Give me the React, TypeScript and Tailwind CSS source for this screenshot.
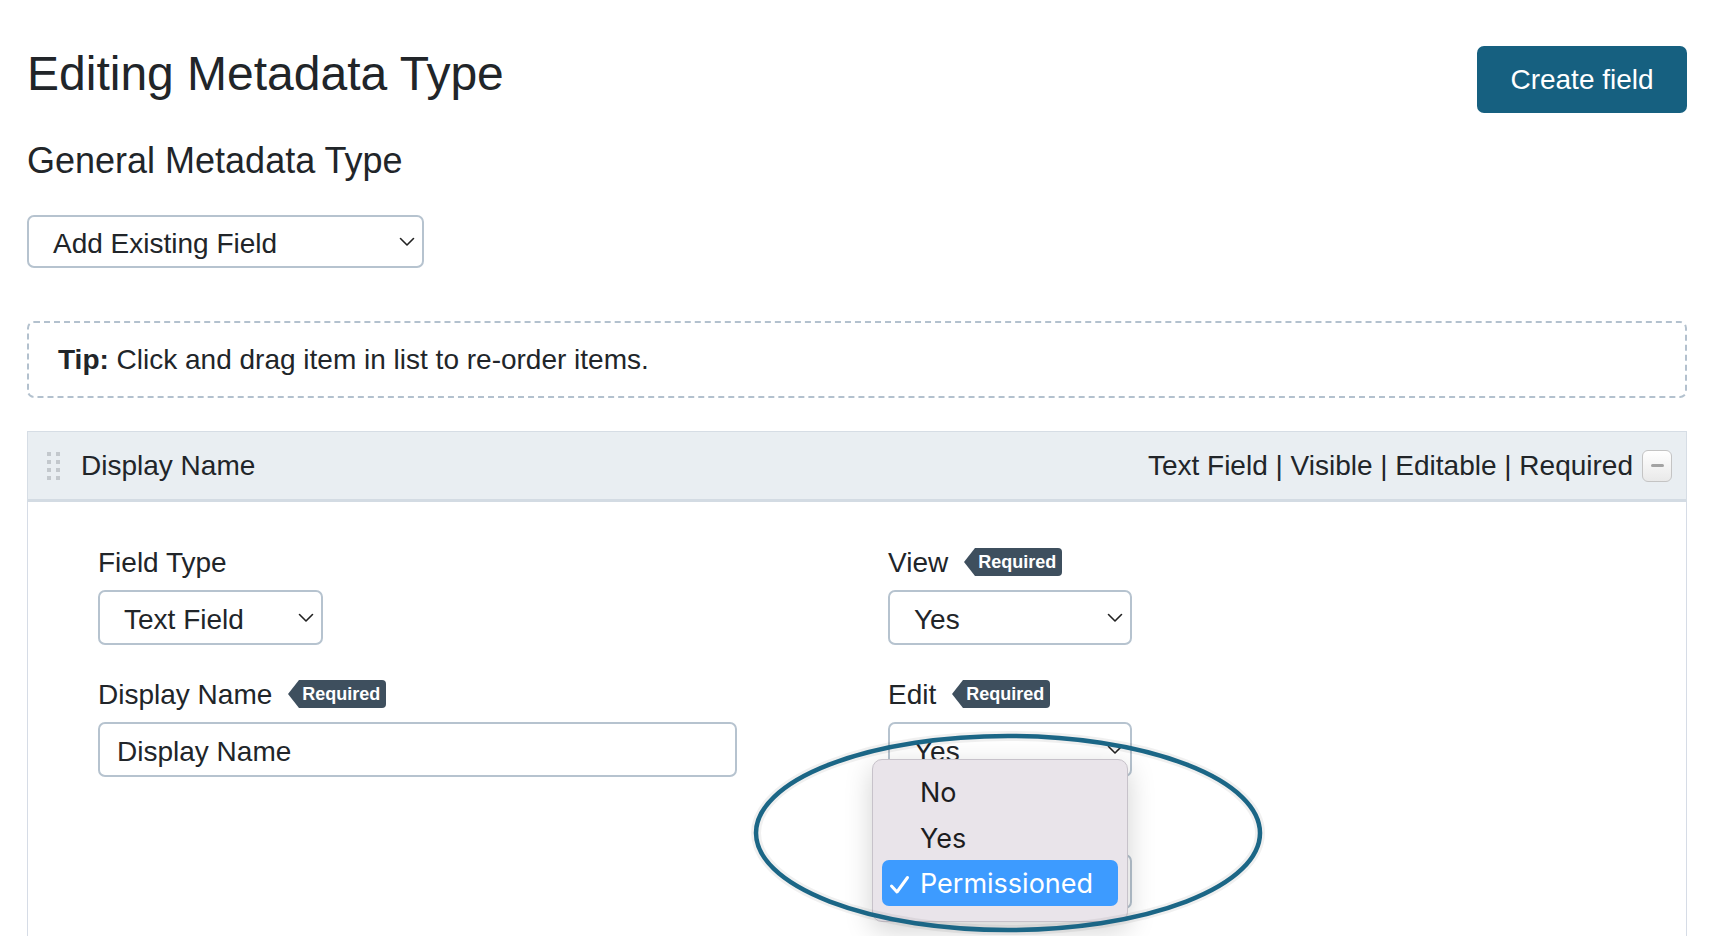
import React from "react";

const Chevron = () => (
  <svg width="16" height="10" viewBox="0 0 16 10" fill="none">
    <path d="M1.5 1.5 L8 8 L14.5 1.5" stroke="#222" strokeWidth="1.6" strokeLinecap="round" strokeLinejoin="round" />
  </svg>
);

const Badge = () => (
  <span className="ml-[16px] mb-[2px] flex items-center h-[28px]">
    <span className="w-0 h-0 border-y-[14px] border-y-transparent border-r-[11px] border-r-[#3e4f5e]" />
    <span className="h-[28px] bg-[#3e4f5e] rounded-r-[4px] pl-[3px] pr-[6px] text-white font-bold text-[18px] leading-[28px]">
      Required
    </span>
  </span>
);

const Select = ({ text, w, h = 55 }: { text: string; w: string; h?: number }) => (
  <div
    className={`${w} ${h === 53 ? "h-[53px]" : "h-[55px]"} border-2 border-[#b6c3cf] rounded-[7px] bg-white flex items-center justify-between pl-[24px] pr-[7px] text-[28px]`}
  >
    <span className="pt-[4px]">{text}</span>
    <Chevron />
  </div>
);

export default function App() {
  return (
    <div className="relative h-[936px] overflow-hidden bg-white font-['Liberation_Sans',Arial,sans-serif] text-[#212529] pl-[27px] pr-[23px] pt-[46px]">
      <div className="flex justify-between items-start">
        <h1 className="text-[48px] leading-none mt-[4px]">Editing Metadata Type</h1>
        <button className="w-[210px] h-[67px] rounded-[7px] bg-[#166080] text-white text-[28px]">Create field</button>
      </div>
      <h2 className="mt-[30px] text-[36px] leading-none">General Metadata Type</h2>
      <div className="mt-[36px]">
        <Select text="Add Existing Field" w="w-[397px]" h={53} />
      </div>
      <div className="mt-[53px] h-[77px] border-2 border-dashed border-[#b3c1ce] rounded-[7px] flex items-center pl-[29px] text-[28px]">
        <span>
          <b>Tip:</b> Click and drag item in list to re-order items.
        </span>
      </div>

      <div className="mt-[33px]">
        <div className="h-[71px] bg-[#e9eef2] border border-[#d6dde5] border-b-[3px] border-b-[#d3dbe3] flex items-center pl-[19px] pr-[14px]">
          <div className="grid grid-cols-2 gap-x-[5px] gap-y-[4px]">
            {Array.from({ length: 8 }).map((_, i) => (
              <span key={i} className="w-[4px] h-[4px] bg-[#c3c8cd]" />
            ))}
          </div>
          <span className="ml-[21px] text-[28px]">Display Name</span>
          <span className="ml-auto text-[28px]">Text Field | Visible | Editable | Required</span>
          <span className="ml-[9px] w-[30px] h-[32px] rounded-[6px] border border-[#c4c4c4] bg-gradient-to-b from-white to-[#e9e9e9] flex items-center justify-center">
            <span className="w-[13px] h-[3px] rounded-full bg-[#a3a3a3]" />
          </span>
        </div>
        <div className="h-[500px] border-x border-[#d6dce6] pt-[43px] pl-[70px] grid grid-cols-[790px_1fr]">
          <div>
            <div className="h-[36px] text-[28px] leading-[36px]">Field Type</div>
            <div className="mt-[9px]">
              <Select text="Text Field" w="w-[225px]" />
            </div>
            <div className="mt-[32px] h-[36px] flex items-center text-[28px] leading-[36px]">
              <span>Display Name</span>
              <Badge />
            </div>
            <div className="mt-[9px] w-[639px] h-[55px] border-2 border-[#b6c3cf] rounded-[7px] flex items-center pl-[17px] pt-[4px] text-[28px]">
              Display Name
            </div>
          </div>
          <div>
            <div className="h-[36px] flex items-center text-[28px] leading-[36px]">
              <span>View</span>
              <Badge />
            </div>
            <div className="mt-[9px]">
              <Select text="Yes" w="w-[244px]" />
            </div>
            <div className="mt-[32px] h-[36px] flex items-center text-[28px] leading-[36px]">
              <span>Edit</span>
              <Badge />
            </div>
            <div className="mt-[9px] relative">
              <Select text="Yes" w="w-[244px]" />
              <div className="absolute z-10 left-[-16px] top-[37px] w-[256px] rounded-[10px] border border-[#c7c2ca] bg-[#e9e4ea] pt-[8px] pb-[15px] px-[9px] shadow-[0_8px_28px_rgba(0,0,0,0.18)] font-['Inter',sans-serif] text-[27px] text-[#1d1d1f]">
                <div className="h-[46px] flex items-center pl-[38px] pt-[5px]">No</div>
                <div className="h-[46px] flex items-center pl-[38px] pt-[5px]">Yes</div>
                <div className="h-[46px] flex items-center rounded-[7px] bg-[#3d9bff] text-white pl-[7px] pt-[3px]">
                  <svg width="21" height="20" viewBox="0 0 21 20" fill="none">
                    <path d="M2.5 11 L8 17 L18.5 2.5" stroke="white" strokeWidth="3" strokeLinecap="round" strokeLinejoin="round" />
                  </svg>
                  <span className="ml-[10px]">Permissioned</span>
                </div>
              </div>
            </div>
            <div className="mt-[32px] h-[36px]" />
            <div className="mt-[9px]">
              <div className="w-[244px] h-[55px] border-2 border-[#b6c3cf] rounded-[7px] bg-white" />
            </div>
          </div>
        </div>
      </div>

      <svg className="absolute left-[750px] top-[730px] z-20 pointer-events-none" width="516" height="206" viewBox="0 0 516 206" fill="none">
        <ellipse cx="258" cy="103" rx="252" ry="97" stroke="rgba(0,0,0,0.06)" strokeWidth="10" />
        <ellipse cx="258" cy="103" rx="252" ry="97" stroke="#1b6686" strokeWidth="4.5" />
      </svg>
    </div>
  );
}
